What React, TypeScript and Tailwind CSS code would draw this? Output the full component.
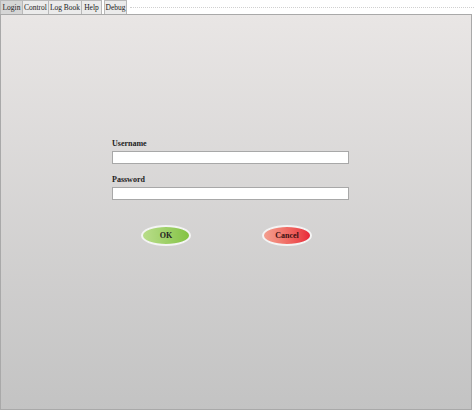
export default function App() {
  const tabs = [
    { label: "Login", w: "w-[23px]" },
    { label: "Control", w: "w-[27px]" },
    { label: "Log Book", w: "w-[34px]" },
    { label: "Help", w: "w-[21px]" },
  ];

  return (
    <div className="w-[474px] h-[411px] bg-white flex flex-col font-['Liberation_Serif',serif] text-[#222]">
      {/* tab strip */}
      <div className="flex items-stretch h-[14px]">
        {tabs.map((t, i) => (
          <div
            key={t.label}
            className={`${t.w} flex items-center justify-center whitespace-nowrap text-[7.5px] leading-none border border-[#b9b9b9] border-b-0 ${
              i === 0 ? "bg-[#d6d6d6]" : "bg-[#ebebeb]"
            } -mr-px`}
          >
            {t.label}
          </div>
        ))}
        <div className="w-[3px]" />
        <div className="w-[23px] flex items-center justify-center whitespace-nowrap text-[7.5px] leading-none border border-[#b9b9b9] border-b-0 bg-[#ebebeb]">
          Debug
        </div>
        <div className="flex-1 flex items-center pl-[3px]">
          <div className="w-full border-t border-dotted border-[#d0d0d0]" />
        </div>
      </div>

      {/* panel */}
      <div className="w-[472px] h-[396px] border border-[#a9a9a9] bg-gradient-to-b from-[#e9e6e5] to-[#c3c3c3] flex flex-col">
        <div className="pt-[125px] pl-[111px] flex flex-col">
          <label className="text-[8px] font-bold leading-none mb-[3px]">Username</label>
          <div className="w-[237px] h-[13px] bg-white border border-[#a8a8a8]" />
          <label className="text-[8px] font-bold leading-none mt-[12px] mb-[3px]">Password</label>
          <div className="w-[237px] h-[13px] bg-white border border-[#a8a8a8]" />

          <div className="flex mt-[25px] pl-[29px] gap-[71px]">
            <button className="w-[50px] h-[21px] rounded-[50%] border-2 border-[#f4f4f4] bg-gradient-to-r from-[#b9dd8a] to-[#84c342] text-[8px] font-bold leading-none text-[#222]">
              OK
            </button>
            <button className="w-[50px] h-[21px] rounded-[50%] border-2 border-[#f4f4f4] bg-gradient-to-r from-[#f39f8f] to-[#e8243a] text-[8px] font-bold leading-none text-[#3a1010]">
              Cancel
            </button>
          </div>
        </div>
      </div>
    </div>
  );
}
